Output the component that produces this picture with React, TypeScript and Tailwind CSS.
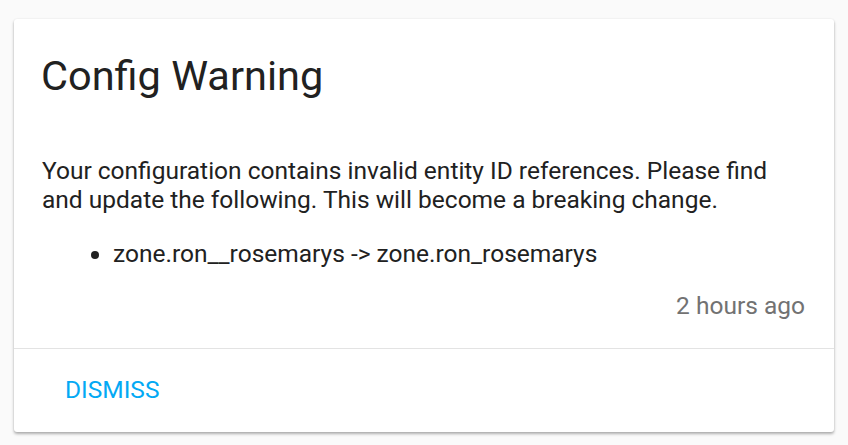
export default function App() {
  return (
    <div
      className="h-[445px] w-[848px] bg-[#fafafa] pt-[19px] pl-[14px]"
      style={{ fontFamily: "Roboto, 'Liberation Sans', sans-serif" }}
    >
      <div className="flex h-[413px] w-[820px] flex-col rounded-[3px] bg-white shadow-[0_2px_3px_rgba(0,0,0,0.3),0_0_2px_rgba(0,0,0,0.08)]">
        {/* Header */}
        <div className="px-[27px] pt-[32px]">
          <h1 className="text-[41.5px] leading-[49px] font-normal text-[#212121]">
            Config Warning
          </h1>
        </div>

        {/* Body */}
        <div className="flex-1 pl-[28px] pr-[29px] pt-[56px] text-[24.5px] leading-[29px] text-[#212121]">
          <p>
            Your configuration contains invalid entity ID references. Please find
            and update the following. This will become a breaking change.
          </p>
          <ul className="mt-[25px] list-disc pl-[71px]">
            <li>zone.ron__rosemarys -&gt; zone.ron_rosemarys</li>
          </ul>
          <div className="mt-[23px] text-right text-[#727272]">2 hours ago</div>
        </div>

        {/* Footer */}
        <div className="flex h-[84px] items-center border-t border-[#e3e3e3] px-[51px]">
          <button className="text-[24.5px] font-normal uppercase text-[#03a9f4]">
            Dismiss
          </button>
        </div>
      </div>
    </div>
  );
}
